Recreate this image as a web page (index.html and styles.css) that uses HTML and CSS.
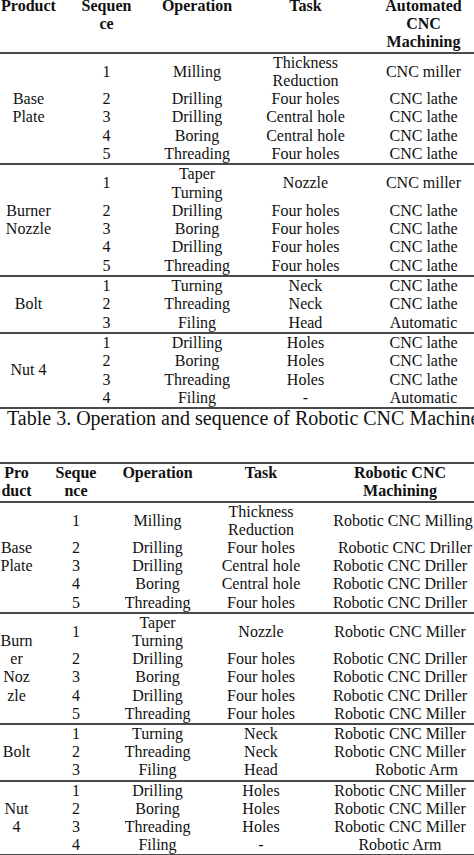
FILE: index.html
```html
<!DOCTYPE html>
<html>
<head>
<meta charset="utf-8">
<link rel="stylesheet" href="styles.css">
</head>
<body>
<div class="page">
  <section class="tbl t1">
    <div class="grid head">
      <div>Product</div><div>Sequen<br>ce</div><div>Operation</div><div>Task</div><div>Automated<br>CNC<br>Machining</div>
    </div>
    <div class="rule"></div>
    <div class="grid group">
      <div class="prod r5">Base<br>Plate</div>
      <div class="mid">1</div><div class="mid">Milling</div><div>Thickness<br>Reduction</div><div class="mid">CNC miller</div>
      <div>2</div><div>Drilling</div><div>Four holes</div><div>CNC lathe</div>
      <div>3</div><div>Drilling</div><div>Central hole</div><div>CNC lathe</div>
      <div>4</div><div>Boring</div><div>Central hole</div><div>CNC lathe</div>
      <div>5</div><div>Threading</div><div>Four holes</div><div>CNC lathe</div>
    </div>
    <div class="rule"></div>
    <div class="grid group">
      <div class="prod r5">Burner<br>Nozzle</div>
      <div class="mid">1</div><div>Taper<br>Turning</div><div class="mid">Nozzle</div><div class="mid">CNC miller</div>
      <div>2</div><div>Drilling</div><div>Four holes</div><div>CNC lathe</div>
      <div>3</div><div>Boring</div><div>Four holes</div><div>CNC lathe</div>
      <div>4</div><div>Drilling</div><div>Four holes</div><div>CNC lathe</div>
      <div>5</div><div>Threading</div><div>Four holes</div><div>CNC lathe</div>
    </div>
    <div class="rule"></div>
    <div class="grid group">
      <div class="prod r3">Bolt</div>
      <div>1</div><div>Turning</div><div>Neck</div><div>CNC lathe</div>
      <div>2</div><div>Threading</div><div>Neck</div><div>CNC lathe</div>
      <div>3</div><div>Filing</div><div>Head</div><div>Automatic</div>
    </div>
    <div class="rule"></div>
    <div class="grid group">
      <div class="prod r4">Nut 4</div>
      <div>1</div><div>Drilling</div><div>Holes</div><div>CNC lathe</div>
      <div>2</div><div>Boring</div><div>Holes</div><div>CNC lathe</div>
      <div>3</div><div>Threading</div><div>Holes</div><div>CNC lathe</div>
      <div>4</div><div>Filing</div><div>-</div><div>Automatic</div>
    </div>
    <div class="rule"></div>
  </section>

  <p class="caption">Table 3. Operation and sequence of Robotic CNC Machine</p>

  <section class="tbl t2">
    <div class="rule"></div>
    <div class="grid head">
      <div>Pro<br>duct</div><div>Seque<br>nce</div><div>Operation</div><div>Task</div><div>Robotic CNC<br>Machining</div>
    </div>
    <div class="rule"></div>
    <div class="grid group">
      <div class="prod r5">Base<br>Plate</div>
      <div class="mid">1</div><div class="mid">Milling</div><div>Thickness<br>Reduction</div><div class="mid sh-s">Robotic CNC Milling</div>
      <div>2</div><div>Drilling</div><div>Four holes</div><div class="sh-m">Robotic CNC Driller</div>
      <div>3</div><div>Drilling</div><div>Central hole</div><div>Robotic CNC Driller</div>
      <div>4</div><div>Boring</div><div>Central hole</div><div>Robotic CNC Driller</div>
      <div>5</div><div>Threading</div><div>Four holes</div><div>Robotic CNC Driller</div>
    </div>
    <div class="rule"></div>
    <div class="grid group">
      <div class="prod r5">Burn<br>er<br>Noz<br>zle</div>
      <div class="mid">1</div><div>Taper<br>Turning</div><div class="mid">Nozzle</div><div class="mid">Robotic CNC Miller</div>
      <div>2</div><div>Drilling</div><div>Four holes</div><div>Robotic CNC Driller</div>
      <div>3</div><div>Boring</div><div>Four holes</div><div>Robotic CNC Driller</div>
      <div>4</div><div>Drilling</div><div>Four holes</div><div>Robotic CNC Driller</div>
      <div>5</div><div>Threading</div><div>Four holes</div><div>Robotic CNC Miller</div>
    </div>
    <div class="rule"></div>
    <div class="grid group">
      <div class="prod r3">Bolt</div>
      <div>1</div><div>Turning</div><div>Neck</div><div>Robotic CNC Miller</div>
      <div>2</div><div>Threading</div><div>Neck</div><div>Robotic CNC Miller</div>
      <div>3</div><div>Filing</div><div>Head</div><div class="sh-l">Robotic Arm</div>
    </div>
    <div class="rule"></div>
    <div class="grid group">
      <div class="prod r4">Nut<br>4</div>
      <div>1</div><div>Drilling</div><div>Holes</div><div>Robotic CNC Miller</div>
      <div>2</div><div>Boring</div><div>Holes</div><div>Robotic CNC Miller</div>
      <div>3</div><div>Threading</div><div>Holes</div><div>Robotic CNC Miller</div>
      <div>4</div><div>Filing</div><div>-</div><div>Robotic Arm</div>
    </div>
    <div class="rule"></div>
  </section>
</div>
</body>
</html>
```

FILE: styles.css
```css
html, body {
  margin: 0;
  padding: 0;
}

body {
  width: 474px;
  height: 855px;
  overflow: hidden;
  background: #ffffff;
  color: #111111;
  font-family: "Liberation Serif", "Times New Roman", serif;
  font-size: 16px;
  line-height: 18.3px;
}

.page {
  margin-top: -3.4px;
}

.grid {
  display: grid;
  text-align: center;
  white-space: nowrap;
}

.t1 .grid {
  grid-template-columns: 57px 99px 82px 135px 101px;
}

.t2 {
  margin-top: 34px;
  line-height: 18.2px;
}

.t2 .grid {
  grid-template-columns: 33px 86px 77px 130px 148px;
}

.head {
  font-weight: bold;
  align-items: start;
}

.rule {
  height: 2px;
  background: #4a4a4a;
}

.prod {
  grid-column: 1;
  align-self: center;
}

.r3 { grid-row: 1 / span 3; }
.r4 { grid-row: 1 / span 4; }
.r5 { grid-row: 1 / span 5; }

.mid {
  align-self: center;
}

.caption {
  margin: -1px 0 0 0;
  padding-left: 7px;
  font-size: 20px;
  line-height: 20px;
  white-space: nowrap;
}

.sh-s { padding-left: 6px; }
.sh-m { padding-left: 10px; }
.sh-l { padding-left: 33px; }
```
